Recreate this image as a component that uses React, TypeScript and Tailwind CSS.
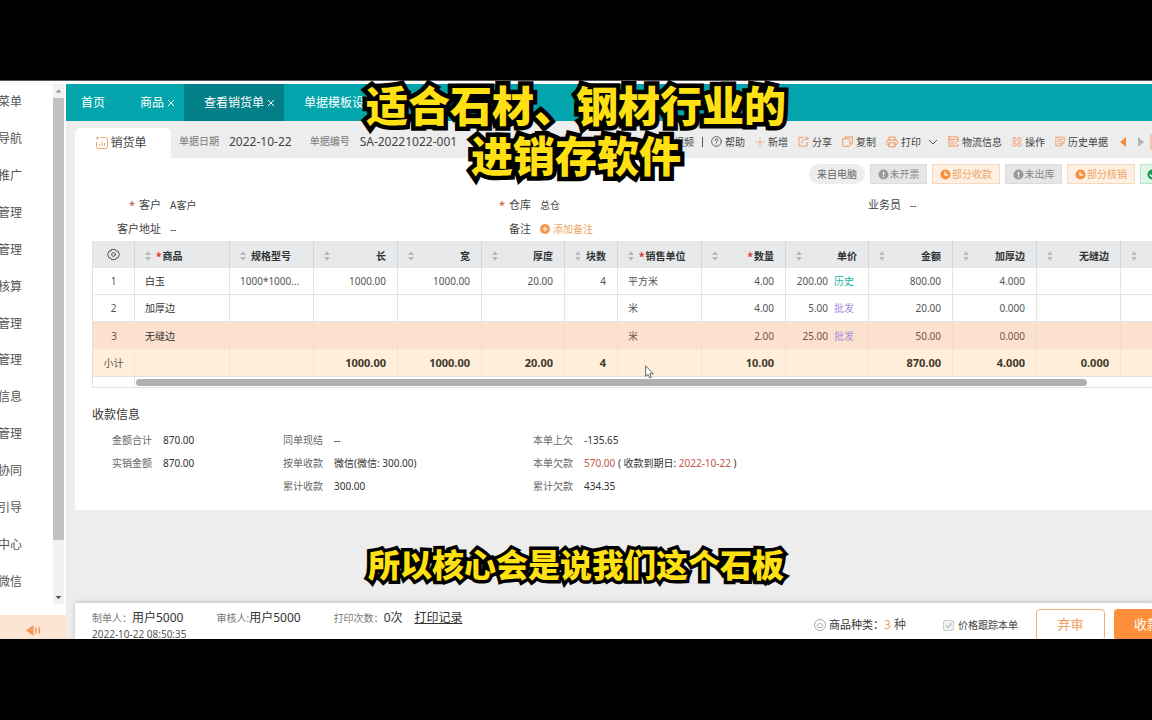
import React from "react";

const menu = ["菜单", "导航", "推广", "管理", "管理", "核算", "管理", "管理", "信息", "管理", "协同", "引导", "中心", "微信"];

type Column = { name: string; width: number; align: "left" | "right"; required?: boolean };

const columns: Column[] = [
  { name: "商品", width: 95, align: "left", required: true },
  { name: "规格型号", width: 84, align: "left" },
  { name: "长", width: 84, align: "right" },
  { name: "宽", width: 84, align: "right" },
  { name: "厚度", width: 83, align: "right" },
  { name: "块数", width: 53, align: "right" },
  { name: "销售单位", width: 84, align: "left", required: true },
  { name: "数量", width: 84, align: "right", required: true },
  { name: "单价", width: 83, align: "right" },
  { name: "金额", width: 84, align: "right" },
  { name: "加厚边", width: 84, align: "right" },
  { name: "无缝边", width: 84, align: "right" },
  { name: "", width: 84, align: "right" },
];

type Price = { value: string; tag: string };
type Cell = string | Price;

const rows: Cell[][] = [
  ["白玉", "1000*1000...", "1000.00", "1000.00", "20.00", "4", "平方米", "4.00", { value: "200.00", tag: "历史" }, "800.00", "4.000", "", ""],
  ["加厚边", "", "", "", "", "", "米", "4.00", { value: "5.00", tag: "批发" }, "20.00", "0.000", "", ""],
  ["无缝边", "", "", "", "", "", "米", "2.00", { value: "25.00", tag: "批发" }, "50.00", "0.000", "", ""],
];

const totals = ["", "", "1000.00", "1000.00", "20.00", "4", "", "10.00", "", "870.00", "4.000", "0.000", ""];

const iconProps = {
  viewBox: "0 0 12 12",
  fill: "none",
  stroke: "currentColor",
  strokeWidth: 1,
  strokeLinecap: "round" as const,
  strokeLinejoin: "round" as const,
  "aria-hidden": true,
};

function SortIcon() {
  return (
    <svg viewBox="0 0 8 12" className="h-3 w-2 shrink-0 fill-[#b9bbbd]" aria-hidden="true">
      <path d="M4 1 7 5H1zM4 11 1 7h6z" />
    </svg>
  );
}

function SheetIcon() {
  return (
    <svg viewBox="0 0 13 14" className="h-3.5 w-[13px]" fill="none" stroke="#f0a868" aria-hidden="true">
      <path d="M5.500 1.500h5q2 0 2 2v7q0 2-2 2h-7q-2 0-2-2V6" />
      <path d="M4.500 10V8M7 10V5.500M9.500 10V7M1 2h3M2.500.500v3" />
    </svg>
  );
}

function GearIcon() {
  return (
    <svg {...iconProps} viewBox="0 0 14 14" className="mx-auto h-[13px] w-[13px] text-[#444]">
      <path d="M5 1.500h4l1 1.800h1.800L13.300 7l-1.500 3.700H10l-1 1.800H5l-1-1.800H2.200L.7 7l1.500-3.700H4z" />
      <circle cx="7" cy="7" r="2" />
    </svg>
  );
}

function HelpIcon() {
  return (
    <svg {...iconProps} className="h-[11px] w-[11px] text-[#555]">
      <circle cx="6" cy="6" r="5.300" />
      <path d="M4.500 4.800q0-1.600 1.500-1.600t1.500 1.400Q7.500 5.400 6 6v1M6 8.600v.2" />
    </svg>
  );
}
function PlusIcon() {
  return (
    <svg {...iconProps} className="h-[10px] w-[10px] text-[#f5a47c]">
      <path d="M6 1.500v9M1.500 6h9" />
    </svg>
  );
}
function ShareIcon() {
  return (
    <svg {...iconProps} className="h-[11px] w-[11px] text-[#f2935f]">
      <path d="M5.500 1.500H1v9.500h9V7M4 7.500Q4.500 3 11 2.500M8.800.6l2.300 1.900L9.200 4.700" />
    </svg>
  );
}
function CopyIcon() {
  return (
    <svg {...iconProps} className="h-[11px] w-[11px] text-[#f2935f]">
      <path d="M3.500 3V1h8v7.500h-2" />
      <rect x=".7" y="3" width="8" height="8.300" rx=".8" />
    </svg>
  );
}
function PrintIcon() {
  return (
    <svg {...iconProps} className="h-3 w-3 text-[#f2935f]">
      <path d="M3 4V1h6v3M3 8.500H1.500Q.7 8.500.7 7.500v-2Q.7 4 2 4h8q1.300 0 1.300 1.500v2q0 1-.8 1H9" />
      <path d="M3 6.800h6v4H3z" />
    </svg>
  );
}
function FormIcon() {
  return (
    <svg {...iconProps} className="h-[11px] w-[11px] text-[#f2935f]">
      <path d="M1 1h10v5M11 9v2H1V1M1 3.800h10M3 6.300h4M3 8.600h2.500M7 9l3-2.500" />
    </svg>
  );
}
function GridIcon() {
  return (
    <svg {...iconProps} className="h-[10px] w-[10px] text-[#f2935f]">
      <rect x="1" y="1" width="4" height="4" rx="1.500" />
      <rect x="7" y="1" width="4" height="4" rx="1.500" />
      <rect x="1" y="7" width="4" height="4" rx="1.500" />
      <rect x="7" y="7" width="4" height="4" rx="1.500" />
    </svg>
  );
}
function HistoryIcon() {
  return (
    <svg {...iconProps} className="h-[11px] w-[10px] text-[#f2935f]">
      <path d="M1.500.8h9.500v6L7.500 11.200h-6zM3.500 3.300h5.500M3.500 5.600h4M4 8.600h2M7.500 11V7.500H11" />
    </svg>
  );
}

function Tool({ icon, children }: { icon?: React.ReactNode; children: React.ReactNode }) {
  return (
    <button type="button" className="flex shrink-0 items-center gap-[3px] text-[10px] leading-4 text-[#444]">
      {icon}
      {children}
    </button>
  );
}

function StatusDot({ kind }: { kind: "alert" | "clock" | "check" }) {
  return (
    <svg viewBox="0 0 12 12" className="h-[11px] w-[11px] shrink-0" fill="none" stroke="#fff" strokeWidth="1.400" aria-hidden="true">
      {kind === "alert" && (
        <>
          <circle cx="6" cy="6" r="5.500" fill="#999" stroke="none" />
          <path d="M6 3v4M6 8v1.300" />
        </>
      )}
      {kind === "clock" && (
        <>
          <circle cx="6" cy="6" r="5.500" fill="#f5913e" stroke="none" />
          <path d="M5.500 3v3.500h3.500" />
        </>
      )}
      {kind === "check" && (
        <>
          <circle cx="6" cy="6" r="5.500" fill="#169c4b" stroke="none" />
          <path d="m3 6 2.300 2.300L9 4.500" />
        </>
      )}
    </svg>
  );
}

function GreyTag({ children }: { children: React.ReactNode }) {
  return (
    <span className="flex h-5 w-[57px] shrink-0 items-center justify-center gap-px border border-[#dcdcdc] bg-[#e6e6e6] text-[10px] text-[#888]">
      <StatusDot kind="alert" />
      {children}
    </span>
  );
}

function OrangeTag({ children }: { children: React.ReactNode }) {
  return (
    <span className="flex h-5 w-[68px] shrink-0 items-center justify-center gap-px border border-[#f7d9bd] bg-[#fdf0e3] text-[10px] text-[#f0a566]">
      <StatusDot kind="clock" />
      {children}
    </span>
  );
}

function Field({ label, required, children }: { label: string; required?: boolean; children: React.ReactNode }) {
  return (
    <div className="flex items-center gap-[9px] text-[#444]">
      <dt className="w-[69px] shrink-0 text-right text-[11px]">
        {required && <span className="mr-1 text-[#c94a3c]">*</span>}
        {label}
      </dt>
      <dd className="flex items-center gap-[3px] text-[10px]">{children}</dd>
    </div>
  );
}

function Amount({ label, children }: { label: string; children?: React.ReactNode }) {
  return (
    <div className="flex h-[23px] items-center gap-[11px] text-[10px]">
      <dt className="text-[#666]">{label}</dt>
      <dd className="whitespace-nowrap text-[#333]">{children}</dd>
    </div>
  );
}

function Tab({ label, active }: { label: string; active?: boolean }) {
  return (
    <div className={active ? "flex items-center gap-[3px] bg-[#038087] pr-[9px] pl-5" : "flex items-center gap-[3px] pr-[9px] pl-5"}>
      <a href="#tab">{label}</a>
      <button type="button" aria-label="关闭" className="h-2 w-2">
        <svg viewBox="0 0 8 8" className="h-2 w-2" stroke="#fff" aria-hidden="true">
          <path d="m1 1 6 6M7 1 1 7" />
        </svg>
      </button>
    </div>
  );
}

function Sidebar() {
  return (
    <aside className="flex w-[66px] shrink-0 flex-col bg-white">
      <div className="flex min-h-0 flex-1">
        <nav className="flex flex-1 flex-col pb-1">
          {menu.map((item, i) => (
            <a key={i} href="#menu" className="flex w-[22px] flex-1 items-center justify-end overflow-hidden text-xs whitespace-nowrap text-[#555]">
              {item}
            </a>
          ))}
        </nav>
        <div className="mr-[2px] flex w-[11px] flex-col items-center bg-[#f1f1f1]">
          <svg viewBox="0 0 11 15" className="h-3.5 w-[11px] fill-[#8a8a8a]" aria-hidden="true">
            <path d="M5.500 6 8.500 9h-6z" />
          </svg>
          <div className="w-full flex-1 bg-[#c1c1c1]" />
          <svg viewBox="0 0 11 64" className="h-16 w-[11px] fill-[#505050]" aria-hidden="true">
            <path d="M5.500 59 8.500 56h-6z" />
          </svg>
        </div>
      </div>
      <div className="mt-[11px] flex h-6 items-center justify-end bg-[#fce5d3] pt-1.5 pr-[25px]">
        <button type="button" aria-label="收起">
          <svg viewBox="0 0 15 11" className="h-[11px] w-[15px] fill-[#f29a55]" aria-hidden="true">
            <path d="M0 5.500 7.500 0v11zM9 2.500h1.500v6H9zM12.500 2.500H14v6h-1.500z" />
          </svg>
        </button>
      </div>
    </aside>
  );
}

function ItemsTable() {
  return (
    <div className="overflow-hidden border-b border-l border-[#dfe1e2]">
      <table className="w-[1112px] table-fixed border-separate border-spacing-0 text-[10px] leading-4 text-[#555]">
        <colgroup>
          <col style={{ width: 42 }} />
          {columns.map((c, i) => (
            <col key={i} style={{ width: c.width }} />
          ))}
        </colgroup>
        <thead>
          <tr className="h-[27px] bg-[#e7e9eb]">
            <th className="border-r border-[#d5d7d9] p-0">
              <GearIcon />
            </th>
            {columns.map((c, i) => (
              <th key={i} className="border-r border-[#d5d7d9] p-0 pt-0.5 pr-[11px] pl-[9px] font-bold text-[#333]">
                <div className="flex items-center gap-1">
                  <SortIcon />
                  <span className={c.align === "right" ? "flex-1 text-right whitespace-nowrap" : "whitespace-nowrap"}>
                    {c.required && <span className="mr-px text-[#d93a2f]"> *</span>}
                    {c.name}
                  </span>
                </div>
              </th>
            ))}
          </tr>
        </thead>
        <tbody>
          {rows.map((row, r) => (
            <tr key={r} className={r === 2 ? "h-[27px] bg-[#fde1cf] text-[#75564a]" : "h-[27px]"}>
              <td className={r === 2 ? "p-0 text-center" : "border-r border-b border-[#e3e4e5] p-0 text-center"}>{r + 1}</td>
              {row.map((cell, i) => (
                <td
                  key={i}
                  className={
                    (r === 2 ? "border-r border-[#f8dccb] " : "border-r border-b border-[#e3e4e5] ") +
                    (columns[i].align === "right" ? "p-0 pr-[11px] text-right" : "p-0 pl-2.5 text-left") +
                    (i === 0 ? " text-[#333]" : "")
                  }
                >
                  {typeof cell === "string" ? (
                    cell
                  ) : (
                    <span className="flex items-center justify-end gap-1.5 pr-[3px]">
                      {cell.value}
                      <a href="#price" className={cell.tag === "历史" ? "text-[#1fb0a8]" : "text-[#a48fe0]"}>
                        {cell.tag}
                      </a>
                    </span>
                  )}
                </td>
              ))}
            </tr>
          ))}
        </tbody>
        <tfoot>
          <tr className="h-[27px] bg-[#feeeda] font-bold text-[#40382c]">
            <td className="border-r border-[#f3e4d0] p-0 text-center font-normal text-[#555]">小计</td>
            {totals.map((t, i) => (
              <td key={i} className="border-r border-[#f3e4d0] p-0 pr-[11px] text-right text-[11px]">
                {t}
              </td>
            ))}
          </tr>
        </tfoot>
      </table>
      <div className="flex h-[11px] items-center border-t border-[#dfe1e2]">
        <div className="mr-px h-full w-[42px] border-r border-[#dfe1e2]" />
        <div className="mr-[65px] h-[7px] flex-1 rounded-full bg-[#b0b0b0]" />
      </div>
    </div>
  );
}

export default function App() {
  return (
    <div className="relative flex h-screen flex-col overflow-hidden bg-black pt-20 pb-[81px] font-['Noto_Sans','Noto_Sans_CJK_SC',sans-serif]">
      <div className="flex min-h-0 flex-1 overflow-hidden border-t border-[#555] bg-white pt-[3px]">
        <Sidebar />

        <div className="flex min-w-0 flex-1 flex-col bg-[#ededed]">
          <header className="flex h-[37px] shrink-0 bg-[#03a5ad] text-xs whitespace-nowrap text-white">
            <a href="#home" className="flex w-[54px] items-center pl-[15px]">
              首页
            </a>
            <Tab label="商品" />
            <Tab label="查看销货单" active />
            <Tab label="单据模板设置" />
          </header>

          <main className="flex min-h-0 flex-1 flex-col pl-[9px]">
            <div className="flex h-[37px] shrink-0 items-center overflow-hidden whitespace-nowrap">
              <h1 className="flex h-[30px] w-24 shrink-0 items-center justify-center gap-0.5 self-end rounded-t-md bg-white pr-1 text-xs text-[#444]">
                <SheetIcon />
                销货单
              </h1>
              <dl className="ml-2 flex items-center pt-1 text-[10px] text-[#777]">
                <dt>单据日期</dt>
                <dd className="ml-2.5 text-xs text-[#444]">2022-10-22</dd>
                <dt className="ml-[18px]">单据编号</dt>
                <dd className="ml-2.5 text-xs text-[#444]">SA-20221022-001</dd>
              </dl>
              <div className="ml-auto flex items-center gap-2.5 pt-1">
                <Tool>视频</Tool>
                <span className="-mx-0.5 h-[10px] w-px bg-[#555]" />
                <Tool icon={<HelpIcon />}>帮助</Tool>
                <Tool icon={<PlusIcon />}>新增</Tool>
                <Tool icon={<ShareIcon />}>分享</Tool>
                <Tool icon={<CopyIcon />}>复制</Tool>
                <Tool icon={<PrintIcon />}>
                  打印
                  <svg viewBox="0 0 10 6" className="ml-1 h-1.5 w-2.5" fill="none" stroke="#555" aria-hidden="true">
                    <path d="m1 1 4 4 4-4" />
                  </svg>
                </Tool>
                <Tool icon={<FormIcon />}>物流信息</Tool>
                <Tool icon={<GridIcon />}>操作</Tool>
                <Tool icon={<HistoryIcon />}>历史单据</Tool>
                <button type="button" aria-label="上一张" className="ml-0.5">
                  <svg viewBox="0 0 6 10" className="h-2.5 w-1.5 fill-[#f28a3c]" aria-hidden="true">
                    <path d="M6 0v10L0 5z" />
                  </svg>
                </button>
                <button type="button" aria-label="下一张" className="ml-0.5">
                  <svg viewBox="0 0 6 10" className="h-2.5 w-1.5 fill-[#b5b5b5]" aria-hidden="true">
                    <path d="M0 0v10l6-5z" />
                  </svg>
                </button>
                <span className="-ml-1 h-4 w-0.5 bg-[#f5c4a4]" />
              </div>
            </div>

            <section className="bg-white pt-1.5 pl-[17px] pb-3">
              <div className="flex h-5 justify-end gap-[5px] overflow-hidden whitespace-nowrap">
                <span className="flex h-5 w-14 items-center justify-center rounded-full bg-[#ededed] text-[10px] text-[#666]">来自电脑</span>
                <GreyTag>未开票</GreyTag>
                <OrangeTag>部分收款</OrangeTag>
                <GreyTag>未出库</GreyTag>
                <OrangeTag>部分核销</OrangeTag>
                <span className="flex h-5 w-[12px] shrink-0 items-center overflow-hidden border border-r-0 border-[#bfe5cd] bg-[#dff5e7] pl-1.5">
                  <StatusDot kind="check" />
                </span>
              </div>

              <dl className="mt-[9px] grid grid-cols-[370fr_370fr_320fr] leading-6">
                <Field label="客户" required>A客户</Field>
                <Field label="仓库" required>总仓</Field>
                <Field label="业务员">--</Field>
                <Field label="客户地址">--</Field>
                <Field label="备注">
                  <svg viewBox="0 0 10 10" className="h-2.5 w-2.5" aria-hidden="true">
                    <circle cx="5" cy="5" r="5" fill="#f2984e" />
                    <path d="M5 2.500v5M2.500 5h5" stroke="#fff" />
                  </svg>
                  <button type="button" className="text-[#f0a566]">添加备注</button>
                </Field>
              </dl>

              <ItemsTable />

              <h2 className="mt-[18px] text-xs leading-[18px] text-[#333]">收款信息</h2>
              <div className="mt-[5px] grid grid-cols-[171px_250px_1fr] pl-5">
                <dl>
                  <Amount label="金额合计">870.00</Amount>
                  <Amount label="实销金额">870.00</Amount>
                </dl>
                <dl>
                  <Amount label="同单现结">--</Amount>
                  <Amount label="按单收款">微信(微信: 300.00)</Amount>
                  <Amount label="累计收款">300.00</Amount>
                </dl>
                <dl>
                  <Amount label="本单上欠">-135.65</Amount>
                  <Amount label="本单欠款">
                    <span className="text-[#c4554b]">570.00</span> ( 收款到期日: <span className="text-[#c4554b]">2022-10-22</span> )
                  </Amount>
                  <Amount label="累计欠款">434.35</Amount>
                </dl>
              </div>
            </section>

            <footer className="mt-auto flex h-9 shrink-0 items-start overflow-hidden bg-white pl-[17px] whitespace-nowrap shadow-[0_-1px_4px_rgba(0,0,0,0.2)] [clip-path:inset(-6px_0_0_-6px)]">
              <div className="pt-[7px] text-[10px] leading-4 text-[#777]">
                <p className="flex items-center">
                  制单人：<span className="text-xs leading-4 text-[#333]">用户5000</span>
                  <span className="ml-[33px]">审核人:</span>
                  <span className="text-xs leading-4 text-[#333]">用户5000</span>
                  <span className="ml-[33px]">打印次数：</span>
                  <span className="text-xs leading-4 text-[#333]">0次</span>
                  <a href="#log" className="ml-3 text-xs leading-4 text-[#333] underline">打印记录</a>
                </p>
                <p className="text-[#555]">2022-10-22 08:50:35</p>
              </div>
              <div className="ml-auto flex h-11 shrink-0 items-center">
                <svg viewBox="0 0 12 12" className="mr-[3px] h-3 w-3" fill="none" stroke="#aaa" aria-hidden="true">
                  <circle cx="6" cy="6" r="5.500" />
                  <path d="M3 7.500a3 3 0 0 1 6 0M3.500 8.500h5" />
                </svg>
                <span className="text-[11px] text-[#333]">商品种类：</span>
                <span className="text-xs text-[#f0a566]">3</span>
                <span className="ml-[3px] text-xs text-[#555]">种</span>
                <label className="ml-[37px] flex items-center gap-1 text-[10px] text-[#444]">
                  <span className="relative flex h-[11px] w-[11px]">
                    <input type="checkbox" defaultChecked className="h-[11px] w-[11px] appearance-none rounded-[2px] border border-[#ccc] bg-[#f0f0f0]" />
                    <svg viewBox="0 0 11 11" className="pointer-events-none absolute inset-0 h-[11px] w-[11px]" fill="none" stroke="#999" aria-hidden="true">
                      <path d="m3 5.500 2 2 3.500-4" />
                    </svg>
                  </span>
                  价格跟踪本单
                </label>
                <button type="button" className="ml-[18px] h-8 w-[69px] rounded-sm border border-[#f0b07a] bg-white text-[13px] text-[#f0a060]">弃审</button>
                <button type="button" className="ml-[9px] h-8 w-[38px] overflow-hidden rounded-l-sm bg-[#fd8f3a] pl-5 text-left text-[13px] text-white">收款</button>
              </div>
            </footer>
          </main>
        </div>
      </div>

      <svg viewBox="0 0 9 14" className="absolute top-[365px] left-[645px] h-3.5 w-[9px]" fill="#fff" stroke="#444" strokeWidth=".8" aria-hidden="true">
        <path d="M.6.8v10.500l2.400-2 1.700 3.700 1.700-.8-1.600-3.500h3.300z" />
      </svg>

      <p className="pointer-events-none absolute inset-x-0 top-[81px] text-center text-[42px] leading-[50px] font-black text-[#ffe012] [-webkit-text-stroke:9px_#000] [paint-order:stroke_fill] [stroke-linejoin:round]">
        适合石材、钢材行业的
        <br />
        进销存软件
      </p>
      <p className="pointer-events-none absolute inset-x-0 bottom-[135px] text-center text-[32px] leading-10 font-black text-[#ffe012] [-webkit-text-stroke:7px_#000] [paint-order:stroke_fill] [stroke-linejoin:round]">
        所以核心会是说我们这个石板
      </p>
    </div>
  );
}
